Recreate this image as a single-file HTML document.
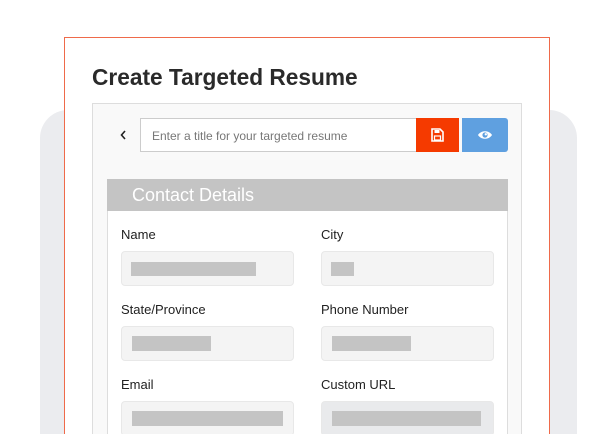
<!DOCTYPE html>
<html><head><meta charset="utf-8"><style>
*{margin:0;padding:0;box-sizing:border-box}
html,body{width:611px;height:434px;overflow:hidden;background:#fff}
body{font-family:"Liberation Sans",Arial,sans-serif}
#w{position:relative;width:611px;height:434px;overflow:hidden}
.bg{position:absolute;left:40px;top:110px;width:537px;height:400px;background:#ebecef;border-radius:28px}
.card{position:absolute;left:64px;top:37px;width:486px;height:420px;background:#fff;border:1px solid #ef6a4a}
h1{position:absolute;left:92px;top:64px;font-size:22.7px;font-weight:bold;color:#2a2a2a}
.panel{position:absolute;left:92px;top:103px;width:430px;height:360px;background:#f9f9f9;border:1px solid #ddd}
.chev{position:absolute;left:119px;top:129px}
.inp{position:absolute;left:140px;top:118px;width:277px;height:34px;background:#fff;border:1px solid #ccc;font-size:12px;color:#777;padding:10px 0 0 11px}
.save{position:absolute;left:416px;top:118px;width:43px;height:34px;background:#f53a00}
.eye{position:absolute;left:462px;top:118px;width:46px;height:34px;background:#5fa0e0;border-radius:0 3px 3px 0}
.hdr{position:absolute;left:107px;top:179px;width:401px;height:32px;background:#c4c4c4;color:#fff;font-size:18px;padding:6px 0 0 25px}
.body{position:absolute;left:107px;top:211px;width:401px;height:260px;background:#fff;border:1px solid #ddd;border-top:none}
.lbl{position:absolute;font-size:13px;color:#222}
.f{position:absolute;width:173px;height:35px;background:#f4f4f4;border:1px solid #e8e8e8;border-radius:4px}
.bar{position:absolute;height:14px;background:#c4c4c4}
</style></head><body><div id="w">
<div class="bg"></div>
<div class="card"></div>
<h1>Create Targeted Resume</h1>
<div class="panel"></div>
<svg class="chev" width="8" height="12" viewBox="0 0 8 12"><path d="M6 2L2.5 6L6 10" fill="none" stroke="#222" stroke-width="1.6"/></svg>
<div class="inp">Enter a title for your targeted resume</div>
<div class="save"><svg width="43" height="34" viewBox="0 0 43 34"><path d="M16 11h8l3 3v9h-11z" fill="none" stroke="#fff" stroke-width="1.6"/><rect x="18.5" y="12" width="5" height="3" fill="#fff"/><rect x="18.5" y="18" width="6" height="4" fill="none" stroke="#fff" stroke-width="1.2"/></svg></div>
<div class="eye"><svg width="46" height="34" viewBox="0 0 46 34"><path d="M16 17c3-5 11-5 14 0c-3 5-11 5-14 0z" fill="#fff"/><circle cx="23" cy="17" r="2.6" fill="#5fa0e0"/><circle cx="23.8" cy="16.3" r="1.2" fill="#fff"/></svg></div>
<div class="hdr">Contact Details</div>
<div class="body"></div>
<div class="lbl" style="left:121px;top:227px">Name</div>
<div class="lbl" style="left:321px;top:227px">City</div>
<div class="f" style="left:121px;top:251px"></div><div class="bar" style="left:131px;top:262px;width:125px"></div>
<div class="f" style="left:321px;top:251px"></div><div class="bar" style="left:331px;top:262px;width:23px"></div>
<div class="lbl" style="left:121px;top:302px">State/Province</div>
<div class="lbl" style="left:321px;top:302px">Phone Number</div>
<div class="f" style="left:121px;top:326px"></div><div class="bar" style="left:132px;top:336px;width:79px;height:15px"></div>
<div class="f" style="left:321px;top:326px"></div><div class="bar" style="left:332px;top:336px;width:79px;height:15px"></div>
<div class="lbl" style="left:121px;top:377px">Email</div>
<div class="lbl" style="left:321px;top:377px">Custom URL</div>
<div class="f" style="left:121px;top:401px"></div><div class="bar" style="left:132px;top:411px;width:151px;height:15px"></div>
<div class="f" style="left:321px;top:401px;background:#e9eaec"></div><div class="bar" style="left:332px;top:411px;width:149px;height:15px"></div>
</div></body></html>
